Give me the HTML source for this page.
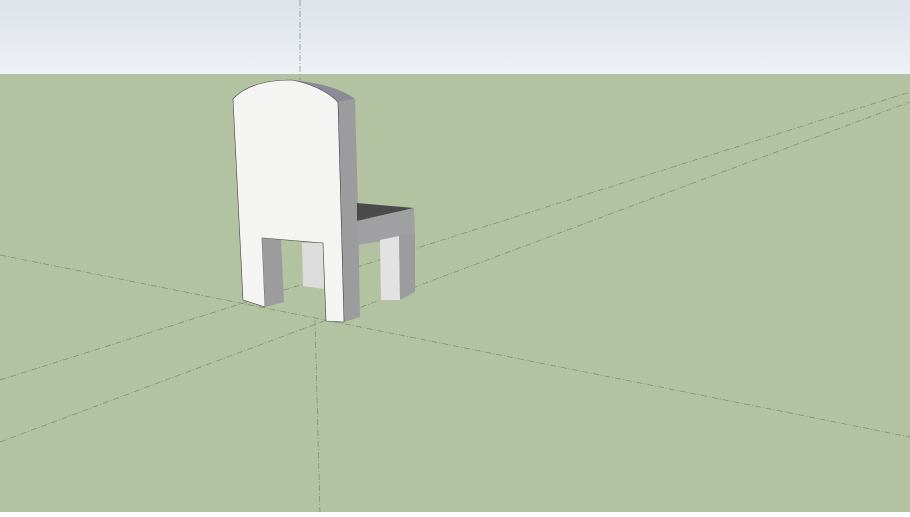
<!DOCTYPE html>
<html><head><style>body{margin:0;width:910px;height:512px;overflow:hidden}</style></head>
<body>
<svg width="910" height="512" viewBox="0 0 910 512" xmlns="http://www.w3.org/2000/svg">
<defs><linearGradient id="sky" x1="0" y1="0" x2="0" y2="1"><stop offset="0" stop-color="#dde3ea"/><stop offset="1" stop-color="#eef1f5"/></linearGradient></defs>
<rect width="910" height="74" fill="url(#sky)"/>
<rect y="74" width="910" height="438" fill="#b3c2a0"/>
<g stroke="#7c8a74" stroke-width="0.7" stroke-dasharray="6,2,1,2" fill="none">
<line x1="300" y1="0" x2="300" y2="80"/>
<line x1="315" y1="320" x2="320" y2="512"/>
<line x1="0" y1="255" x2="910" y2="437"/>
<line x1="0" y1="380" x2="910" y2="92"/>
<line x1="0" y1="442" x2="910" y2="102"/>
</g>
<polygon points="338,102 355,99 358,205 360,317 344,322" fill="#9c9c9e"/>
<polygon points="357,203 414,208 357,221" fill="#4a4a4a"/>
<polygon points="357,221 414,208 415,236 357,245" fill="#a0a0a2"/>
<polygon points="380,240 399,236 400,300 381,300" fill="#e2e2e2"/>
<polygon points="399,236 415,234 415,292 400,300" fill="#9c9c9e"/>
<polygon points="302,243 323,243 324,289 303,286" fill="#dcdcdc"/>
<path d="M292,80 Q335,84 355,99 L338,102 Q320,86 292,80 Z" fill="#8a8a98"/>
<path d="M233,99 Q250,80 292,80 Q322,86 338,102 L344,322 L326,321 L323,243 L262,238 L265,307 L243,300 Z" fill="#f4f4f2" stroke="#444" stroke-width="0.6"/>
<polygon points="262,238 281,240 284,302 265,307" fill="#9c9c9e"/>
</svg>
</body></html>
